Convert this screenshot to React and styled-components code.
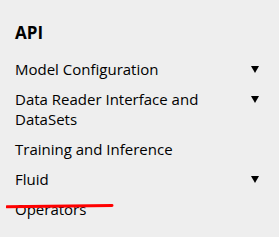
import React from "react"
import styled, { createGlobalStyle } from "styled-components"

const GlobalStyle = createGlobalStyle`
  html, body {
    margin: 0;
    padding: 0;
    background: #eeeeee;
  }
  body {
    font-family: "Open Sans", "Noto Sans", sans-serif;
    color: #000;
  }
`

const Sidebar = styled.nav`
  position: relative;
  width: 279px;
  height: 237px;
  box-sizing: border-box;
  padding: 23px 20px 0 15px;
  background: #eeeeee;
  overflow: hidden;
`

const Heading = styled.h2`
  margin: 0 0 16px;
  font-size: 17px;
  line-height: 20px;
  font-weight: 700;
`

const List = styled.ul`
  list-style: none;
  margin: 0;
  padding: 0;
  display: flex;
  flex-direction: column;
  gap: 10px;
`

const Item = styled.li`
  display: flex;
  justify-content: space-between;
  align-items: flex-start;
  font-size: 15px;
  line-height: 20px;
`

const Label = styled.span`
  max-width: 205px;
`

const Caret = styled.span`
  width: 0;
  height: 0;
  margin-top: 7px;
  border-left: 4.5px solid transparent;
  border-right: 4.5px solid transparent;
  border-top: 7px solid #000;
`

const Strike = styled.svg`
  position: absolute;
  left: 6px;
  top: 202px;
  width: 110px;
  height: 8px;
`

const items = [
  { label: "Model Configuration", caret: true },
  { label: "Data Reader Interface and DataSets", caret: true },
  { label: "Training and Inference", caret: false },
  { label: "Fluid", caret: true },
  { label: "Operators", caret: false },
]

export default function App() {
  return (
    <>
      <GlobalStyle />
      <Sidebar>
        <Heading>API</Heading>
        <List>
          {items.map(item => (
            <Item key={item.label}>
              <Label>{item.label}</Label>
              {item.caret && <Caret />}
            </Item>
          ))}
        </List>
        <Strike viewBox="0 0 110 8">
          <path d="M1 4.8 L106 3.6" stroke="#ff0000" strokeWidth="3" strokeLinecap="round" />
        </Strike>
      </Sidebar>
    </>
  )
}
